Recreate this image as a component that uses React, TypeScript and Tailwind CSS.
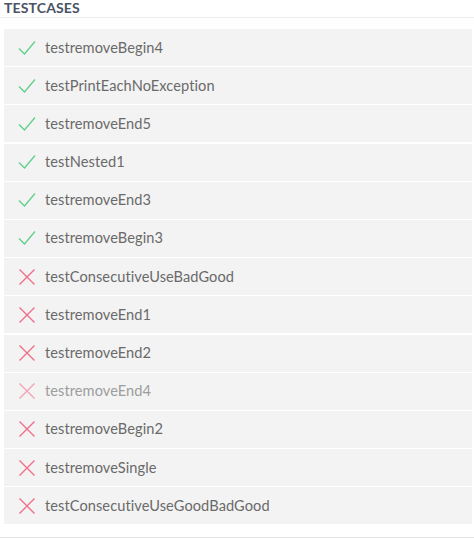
import React from 'react';

type TestCase = { name: string; passed: boolean; dim?: boolean };

const TESTS: TestCase[] = [
  { name: 'testremoveBegin4', passed: true },
  { name: 'testPrintEachNoException', passed: true },
  { name: 'testremoveEnd5', passed: true },
  { name: 'testNested1', passed: true },
  { name: 'testremoveEnd3', passed: true },
  { name: 'testremoveBegin3', passed: true },
  { name: 'testConsecutiveUseBadGood', passed: false },
  { name: 'testremoveEnd1', passed: false },
  { name: 'testremoveEnd2', passed: false },
  { name: 'testremoveEnd4', passed: false, dim: true },
  { name: 'testremoveBegin2', passed: false },
  { name: 'testremoveSingle', passed: false },
  { name: 'testConsecutiveUseGoodBadGood', passed: false },
];

const Check = () => (
  <svg width="18" height="16" viewBox="0 0 18 16" fill="none">
    <path d="M1 8.5 L6.5 14 L17 1.5" stroke="#5ed08a" strokeWidth="1.3" />
  </svg>
);

const Cross = ({ dim }: { dim?: boolean }) => (
  <svg width="18" height="18" viewBox="0 0 18 18" fill="none">
    <path d="M1.5 1.5 L16.5 16.5 M16.5 1.5 L1.5 16.5" stroke={dim ? '#f3a3b3' : '#ef6f88'} strokeWidth="1.4" />
  </svg>
);

export default function App() {
  return (
    <div className="w-[474px] h-[538px] bg-white overflow-hidden" style={{ fontFamily: 'Lato, "Open Sans", sans-serif' }}>
      {/* Header */}
      <div className="h-[18px] border-b border-[#ececec] px-[4px] pt-[1px]">
        <h3 className="text-[14px] leading-[14px] font-bold text-[#4b5366] tracking-[0.01em]">TESTCASES</h3>
      </div>

      {/* List */}
      <div className="mt-[11px] ml-[4px] mr-[2px] flex flex-col gap-[1.2px]">
        {TESTS.map((t) => (
          <div key={t.name} className="h-[37px] bg-[#f3f3f3] flex items-center">
            <div className="w-[41px] flex justify-center pl-[5px] shrink-0">
              {t.passed ? <Check /> : <Cross dim={t.dim} />}
            </div>
            <span className={`text-[14.6px] tracking-[0.005em] ${t.dim ? 'text-[#9d9d9d]' : 'text-[#6a6a6a]'}`}>{t.name}</span>
          </div>
        ))}
      </div>

      <div className="mt-[13px] border-t border-[#e3e3e3]" />
    </div>
  );
}
